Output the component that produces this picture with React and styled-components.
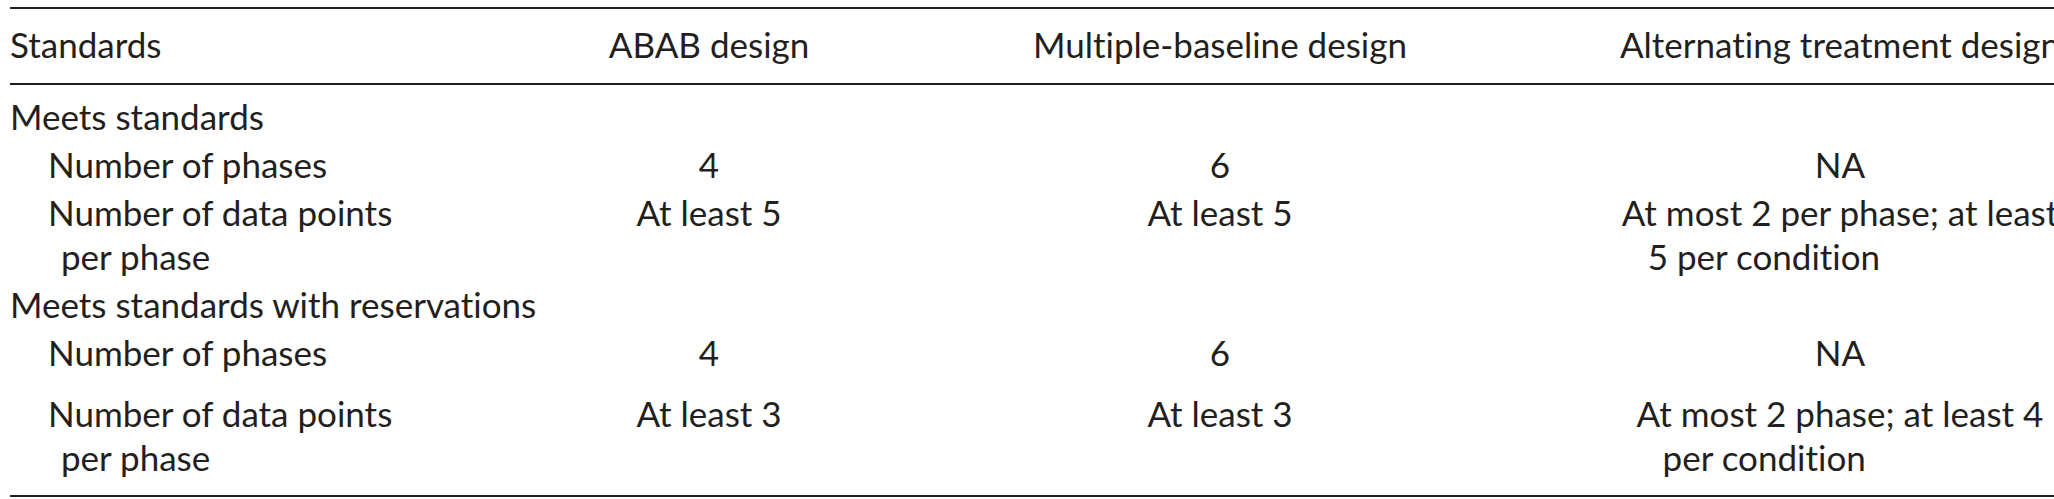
import React from "react";
import styled, { createGlobalStyle } from "styled-components";

const GlobalStyle = createGlobalStyle`
  html, body {
    margin: 0;
    padding: 0;
    background: #ffffff;
    overflow: hidden;
  }
  body {
    font-family: Lato, "Liberation Sans", sans-serif;
    color: #231f20;
    font-variant-ligatures: none;
  }
`;

const Page = styled.div`
  width: 2054px;
  height: 499px;
  overflow: hidden;
  padding-top: 7px;
  padding-left: 10px;
  box-sizing: border-box;
`;

const Table = styled.div`
  width: 2130px;
  border-top: 2px solid #231f20;
  border-bottom: 2px solid #231f20;
  font-size: 35px;
  line-height: 48px;
`;

const Head = styled.div`
  padding: 11px 0 15px;
  border-bottom: 2px solid #231f20;
`;

const Body = styled.div`
  padding: 7px 0 14px;
`;

const Row = styled.div`
  display: grid;
  grid-template-columns: 530px 338px 684px 556px;
  margin-top: ${(p) => (p.$spaced ? "13px" : "0")};
`;

const Label = styled.div`
  text-align: left;
  padding-left: ${(p) => (p.$sub ? "38px" : "0")};
`;

const Cell = styled.div`
  text-align: center;
`;

const Block = styled.div`
  display: inline-block;
  text-align: left;
`;

const Line = styled.div`
  white-space: nowrap;
`;

const Cont = styled.div`
  white-space: nowrap;
  margin-top: -4px;
  padding-left: ${(p) => (p.$wide ? "26px" : "13px")};
`;

export default function App() {
  return (
    <>
      <GlobalStyle />
      <Page>
        <Table>
          <Head>
            <Row>
              <Label>Standards</Label>
              <Cell>ABAB design</Cell>
              <Cell>Multiple-baseline design</Cell>
              <Cell>Alternating treatment design</Cell>
            </Row>
          </Head>
          <Body>
            <Row>
              <Label>Meets standards</Label>
            </Row>
            <Row>
              <Label $sub>Number of phases</Label>
              <Cell>4</Cell>
              <Cell>6</Cell>
              <Cell>NA</Cell>
            </Row>
            <Row>
              <Label $sub>
                <Line>Number of data points</Line>
                <Cont>per phase</Cont>
              </Label>
              <Cell>At least 5</Cell>
              <Cell>At least 5</Cell>
              <Cell>
                <Block>
                  <Line>At most 2 per phase; at least</Line>
                  <Cont $wide>5 per condition</Cont>
                </Block>
              </Cell>
            </Row>
            <Row>
              <Label>Meets standards with reservations</Label>
            </Row>
            <Row>
              <Label $sub>Number of phases</Label>
              <Cell>4</Cell>
              <Cell>6</Cell>
              <Cell>NA</Cell>
            </Row>
            <Row $spaced>
              <Label $sub>
                <Line>Number of data points</Line>
                <Cont>per phase</Cont>
              </Label>
              <Cell>At least 3</Cell>
              <Cell>At least 3</Cell>
              <Cell>
                <Block>
                  <Line>At most 2 phase; at least 4</Line>
                  <Cont $wide>per condition</Cont>
                </Block>
              </Cell>
            </Row>
          </Body>
        </Table>
      </Page>
    </>
  );
}
